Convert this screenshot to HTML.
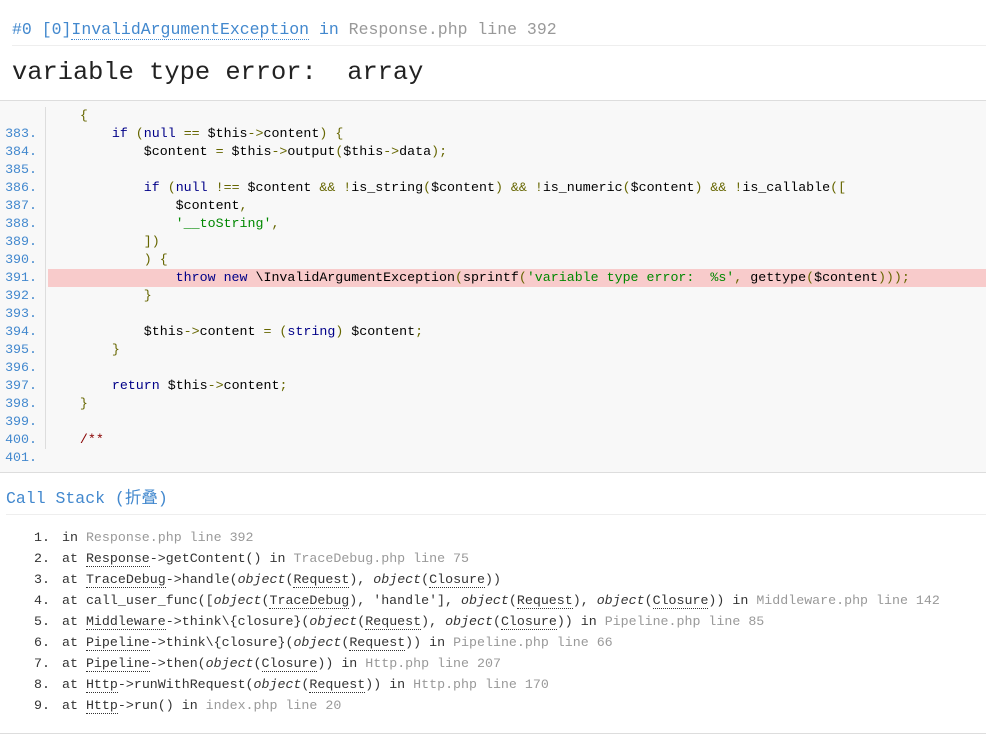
<!DOCTYPE html>
<html><head><meta charset="utf-8"><style>
body{margin:0;background:#fff;width:986px;height:749px;overflow:hidden;font-family:"Liberation Mono","Noto Sans CJK SC",monospace;color:#333;position:relative}
.abs{position:absolute;white-space:pre}
.hd{left:12px;top:19px;font-size:16.5px;color:#999;line-height:22px}
.hd .b{color:#4288ce}
.hd u{text-decoration:none;border-bottom:1px dotted #4288ce}
.hr1{position:absolute;left:12px;right:0;top:45px;height:1px;background:#eee}
.title{left:12px;top:57px;font-size:25.4px;line-height:32px;color:#222}
.code{position:absolute;left:0;right:0;top:100px;height:373px;background:#f8f8f8;border-top:1px solid #ddd;border-bottom:1px solid #ddd;box-sizing:border-box}
.gut{position:absolute;left:45px;top:107px;width:1px;height:342px;background:#ddd}
.ln{position:absolute;left:0;width:37px;text-align:right;font-size:13.3px;line-height:18px;color:#4288ce}
.cl{position:absolute;left:48px;font-size:13.3px;line-height:18px;white-space:pre;color:#000;right:0}
.hl{background:#f8cbcb}
.k{color:#008}.p{color:#660}.s{color:#080}.c{color:#800}
.cs{left:6px;top:488px;font-size:16.5px;line-height:22px;color:#4288ce}
.hr2{position:absolute;left:6px;right:0;top:514px;height:1px;background:#eee}
.li{position:absolute;left:0;font-size:13.3px;line-height:21px;white-space:pre;color:#333}
.li .n{display:inline-block;width:50px;text-align:right;margin-right:12px}
.g{color:#999}
.li u{text-decoration:none;border-bottom:1px dotted #333}
.hr3{position:absolute;left:0;right:0;top:733px;height:1px;background:#ddd}
</style></head><body>
<div class="abs hd"><span class="b">#0 [0]<u>InvalidArgumentException</u> in</span> Response.php line 392</div>
<div class="hr1"></div>
<div class="abs title">variable type error:  array</div>
<div class="code"></div>
<div class="gut"></div>
<div class="cl" style="top:107px">    <span class="p">{</span></div>
<div class="ln" style="top:125px">383.</div><div class="cl" style="top:125px">        <span class="k">if</span> <span class="p">(</span><span class="k">null</span> <span class="p">==</span> $this<span class="p">-&gt;</span>content<span class="p">) {</span></div>
<div class="ln" style="top:143px">384.</div><div class="cl" style="top:143px">            $content <span class="p">=</span> $this<span class="p">-&gt;</span>output<span class="p">(</span>$this<span class="p">-&gt;</span>data<span class="p">);</span></div>
<div class="ln" style="top:161px">385.</div>
<div class="ln" style="top:179px">386.</div><div class="cl" style="top:179px">            <span class="k">if</span> <span class="p">(</span><span class="k">null</span> <span class="p">!==</span> $content <span class="p">&amp;&amp; !</span>is_string<span class="p">(</span>$content<span class="p">) &amp;&amp; !</span>is_numeric<span class="p">(</span>$content<span class="p">) &amp;&amp; !</span>is_callable<span class="p">([</span></div>
<div class="ln" style="top:197px">387.</div><div class="cl" style="top:197px">                $content<span class="p">,</span></div>
<div class="ln" style="top:215px">388.</div><div class="cl" style="top:215px">                <span class="s">'__toString'</span><span class="p">,</span></div>
<div class="ln" style="top:233px">389.</div><div class="cl" style="top:233px">            <span class="p">])</span></div>
<div class="ln" style="top:251px">390.</div><div class="cl" style="top:251px">            <span class="p">) {</span></div>
<div class="ln" style="top:269px">391.</div><div class="cl hl" style="top:269px">                <span class="k">throw</span> <span class="k">new</span> \InvalidArgumentException<span class="p">(</span>sprintf<span class="p">(</span><span class="s">'variable type error:  %s'</span><span class="p">,</span> gettype<span class="p">(</span>$content<span class="p">)));</span></div>
<div class="ln" style="top:287px">392.</div><div class="cl" style="top:287px">            <span class="p">}</span></div>
<div class="ln" style="top:305px">393.</div>
<div class="ln" style="top:323px">394.</div><div class="cl" style="top:323px">            $this<span class="p">-&gt;</span>content <span class="p">= (</span><span class="k">string</span><span class="p">)</span> $content<span class="p">;</span></div>
<div class="ln" style="top:341px">395.</div><div class="cl" style="top:341px">        <span class="p">}</span></div>
<div class="ln" style="top:359px">396.</div>
<div class="ln" style="top:377px">397.</div><div class="cl" style="top:377px">        <span class="k">return</span> $this<span class="p">-&gt;</span>content<span class="p">;</span></div>
<div class="ln" style="top:395px">398.</div><div class="cl" style="top:395px">    <span class="p">}</span></div>
<div class="ln" style="top:413px">399.</div>
<div class="ln" style="top:431px">400.</div><div class="cl" style="top:431px">    <span class="c">/**</span></div>
<div class="ln" style="top:449px">401.</div>
<div class="abs cs">Call Stack (折叠)</div>
<div class="hr2"></div>
<div class="li" style="top:527px"><span class="n">1.</span>in <span class="g">Response.php line 392</span></div>
<div class="li" style="top:548px"><span class="n">2.</span>at <u>Response</u>-&gt;getContent() in <span class="g">TraceDebug.php line 75</span></div>
<div class="li" style="top:569px"><span class="n">3.</span>at <u>TraceDebug</u>-&gt;handle(<i>object</i>(<u>Request</u>), <i>object</i>(<u>Closure</u>))</div>
<div class="li" style="top:590px"><span class="n">4.</span>at call_user_func([<i>object</i>(<u>TraceDebug</u>), 'handle'], <i>object</i>(<u>Request</u>), <i>object</i>(<u>Closure</u>)) in <span class="g">Middleware.php line 142</span></div>
<div class="li" style="top:611px"><span class="n">5.</span>at <u>Middleware</u>-&gt;think\{closure}(<i>object</i>(<u>Request</u>), <i>object</i>(<u>Closure</u>)) in <span class="g">Pipeline.php line 85</span></div>
<div class="li" style="top:632px"><span class="n">6.</span>at <u>Pipeline</u>-&gt;think\{closure}(<i>object</i>(<u>Request</u>)) in <span class="g">Pipeline.php line 66</span></div>
<div class="li" style="top:653px"><span class="n">7.</span>at <u>Pipeline</u>-&gt;then(<i>object</i>(<u>Closure</u>)) in <span class="g">Http.php line 207</span></div>
<div class="li" style="top:674px"><span class="n">8.</span>at <u>Http</u>-&gt;runWithRequest(<i>object</i>(<u>Request</u>)) in <span class="g">Http.php line 170</span></div>
<div class="li" style="top:695px"><span class="n">9.</span>at <u>Http</u>-&gt;run() in <span class="g">index.php line 20</span></div>
<div class="hr3"></div>
</body></html>
